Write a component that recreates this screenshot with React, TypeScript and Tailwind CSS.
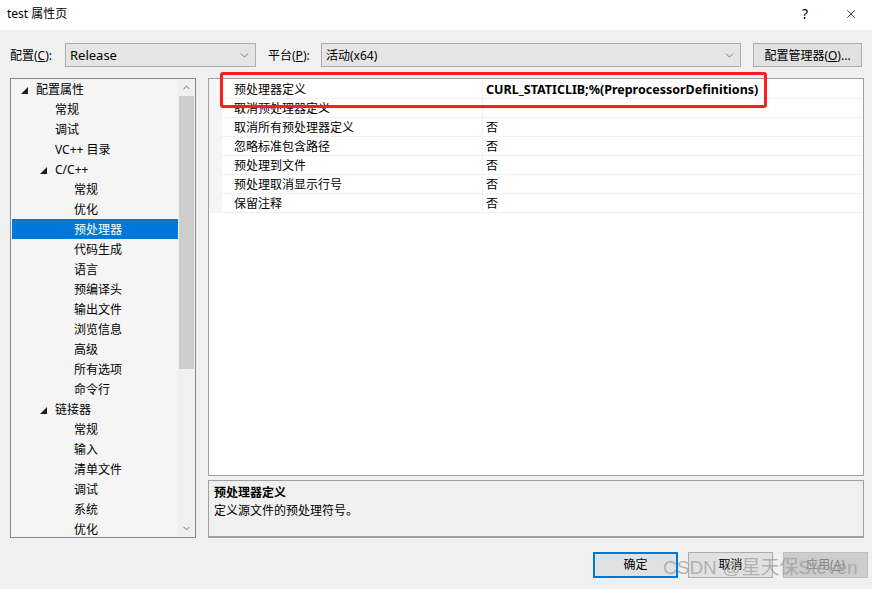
import { ChevronDown, ChevronUp, X } from "lucide-react";

const font = "font-['Segoe_UI','Noto_Sans','Noto_Sans_CJK_SC',sans-serif]";

type TreeItem = { label: string; level: number; expanded?: boolean; selected?: boolean };

const tree: TreeItem[] = [
  { label: "配置属性", level: 0, expanded: true },
  { label: "常规", level: 1 },
  { label: "调试", level: 1 },
  { label: "VC++ 目录", level: 1 },
  { label: "C/C++", level: 1, expanded: true },
  { label: "常规", level: 2 },
  { label: "优化", level: 2 },
  { label: "预处理器", level: 2, selected: true },
  { label: "代码生成", level: 2 },
  { label: "语言", level: 2 },
  { label: "预编译头", level: 2 },
  { label: "输出文件", level: 2 },
  { label: "浏览信息", level: 2 },
  { label: "高级", level: 2 },
  { label: "所有选项", level: 2 },
  { label: "命令行", level: 2 },
  { label: "链接器", level: 1, expanded: true },
  { label: "常规", level: 2 },
  { label: "输入", level: 2 },
  { label: "清单文件", level: 2 },
  { label: "调试", level: 2 },
  { label: "系统", level: 2 },
  { label: "优化", level: 2 },
];

const props: [string, string, boolean?][] = [
  ["预处理器定义", "CURL_STATICLIB;%(PreprocessorDefinitions)", true],
  ["取消预处理器定义", ""],
  ["取消所有预处理器定义", "否"],
  ["忽略标准包含路径", "否"],
  ["预处理到文件", "否"],
  ["预处理取消显示行号", "否"],
  ["保留注释", "否"],
];

function Triangle() {
  return (
    <svg width="7" height="7" viewBox="0 0 7 7" className="shrink-0">
      <path d="M7 0 L7 7 L0 7 Z" fill="#1e1e1e" />
    </svg>
  );
}

export default function App() {
  return (
    <div className={`w-[872px] h-[589px] bg-[#f0f0f0] text-[12px] text-[#000] relative overflow-hidden ${font}`}>
      {/* Title bar */}
      <div className="h-[30px] bg-white flex items-center pl-[7px] pr-[14px]">
        <span className="text-[12px] -mt-[3px]">test 属性页</span>
        <span className="ml-auto mr-[36px] text-[14px] -mt-[3px]">?</span>
        <X className="w-[14px] h-[14px] -mt-[3px]" strokeWidth={1.2} />
      </div>

      {/* Config row */}
      <div className="flex items-center mt-[13px] h-[24px] pl-[10px] pt-[1px]">
        <span className="w-[55px]">配置(<u>C</u>):</span>
        <div className="w-[191px] h-[24px] -mt-[1px] border border-[#adadad] bg-[#e5e5e5] flex items-center pl-[4px] pr-[4px] pt-[1px]">
          <span className="text-[13px]">Release</span>
          <ChevronDown className="ml-auto w-[13px] h-[13px] text-[#555]" strokeWidth={1.3} />
        </div>
        <span className="ml-[12px] w-[53px]">平台(<u>P</u>):</span>
        <div className="w-[420px] h-[24px] -mt-[1px] border border-[#adadad] bg-[#e5e5e5] flex items-center pl-[4px] pr-[4px] pt-[1px]">
          <span className="text-[12px]">活动(x64)</span>
          <ChevronDown className="ml-auto w-[13px] h-[13px] text-[#555]" strokeWidth={1.3} />
        </div>
        <div className="ml-[12px] w-[109px] h-[24px] -mt-[1px] border border-[#adadad] bg-[#e1e1e1] flex items-center justify-center pt-[1px]">
          配置管理器(<u>O</u>)...
        </div>
      </div>

      {/* Main area */}
      <div className="flex mt-[11px] pl-[10px] h-[460px]">
        {/* Tree */}
        <div className="w-[186px] h-[460px] border border-[#828790] bg-[#f5f5f5] flex overflow-hidden">
          <div className="flex-1 pl-[1px] overflow-hidden">
            {tree.map((t, i) => (
              <div
                key={i}
                className={`h-[20px] flex items-center shrink-0 pt-[2px] ${t.selected ? "bg-[#0078d7] text-white" : ""}`}
              >
                <div
                  className={`flex items-center justify-end pr-[8px] ${
                    t.level === 0 ? "w-[24px]" : t.level === 1 ? "w-[43px]" : "w-[62px]"
                  }`}
                >
                  {t.expanded && <Triangle />}
                </div>
                <span className="whitespace-nowrap">{t.label}</span>
              </div>
            ))}
          </div>
          {/* Scrollbar */}
          <div className="w-[17px] bg-[#f0f0f0] flex flex-col">
            <div className="h-[17px] flex items-center justify-center">
              <ChevronUp className="w-[11px] h-[11px] text-[#606060]" strokeWidth={2} />
            </div>
            <div className="h-[273px] mx-[1px] bg-[#cdcdcd]" />
            <div className="flex-1" />
            <div className="h-[17px] flex items-center justify-center">
              <ChevronDown className="w-[11px] h-[11px] text-[#606060]" strokeWidth={2} />
            </div>
          </div>
        </div>

        {/* Right side */}
        <div className="ml-[12px] w-[656px] flex flex-col">
          <div className="h-[398px] border border-[#a0a0a0] bg-white pt-[1px]">
            {props.map(([name, value, bold], i) => (
              <div key={i} className="flex h-[19px]">
                <div className="w-[13px] bg-[#f5f5f5]" />
                <div className="w-[260px] border-b border-[#f0f0f5] pl-[12px] pt-[2px] flex items-center whitespace-nowrap">
                  {name}
                </div>
                <div
                  className={`flex-1 border-b border-l border-[#f0f0f5] pl-[3px] pt-[2px] flex items-center whitespace-nowrap ${
                    bold ? "font-bold text-[12.5px]" : ""
                  }`}
                >
                  {value}
                </div>
              </div>
            ))}
          </div>
          <div className="mt-[4px] h-[58px] border border-[#a0a0a0] border-b-2 bg-[#f0f0f0] pl-[5px] pt-[3px]">
            <div className="font-bold leading-[18px]">预处理器定义</div>
            <div className="leading-[18px]">定义源文件的预处理符号。</div>
          </div>
        </div>
      </div>

      {/* Buttons */}
      <div className="flex mt-[14px] pl-[593px] gap-[10px]">
        <div className="w-[85px] h-[26px] border-2 border-[#0078d7] bg-[#e1e1e1] flex items-center justify-center">
          确定
        </div>
        <div className="w-[85px] h-[26px] border border-[#adadad] bg-[#e1e1e1] flex items-center justify-center">
          取消
        </div>
        <div className="w-[85px] h-[26px] border border-[#bfbfbf] bg-[#cccccc] text-[#838383] flex items-center justify-center">
          应用(<u>A</u>)
        </div>
      </div>

      {/* Red highlight box */}
      <div className="absolute left-[220px] top-[72px] w-[547px] h-[36px] border-[3px] border-[#fa1e1e] rounded-[3px]" />

      {/* Watermark */}
      <div className="absolute left-[663px] top-[556px] text-[19px] leading-[24px] text-[#9a9a9a]/70 font-['Liberation_Sans','Noto_Sans_CJK_SC',sans-serif] whitespace-nowrap">
        CSDN @星天保Steven
      </div>
    </div>
  );
}
